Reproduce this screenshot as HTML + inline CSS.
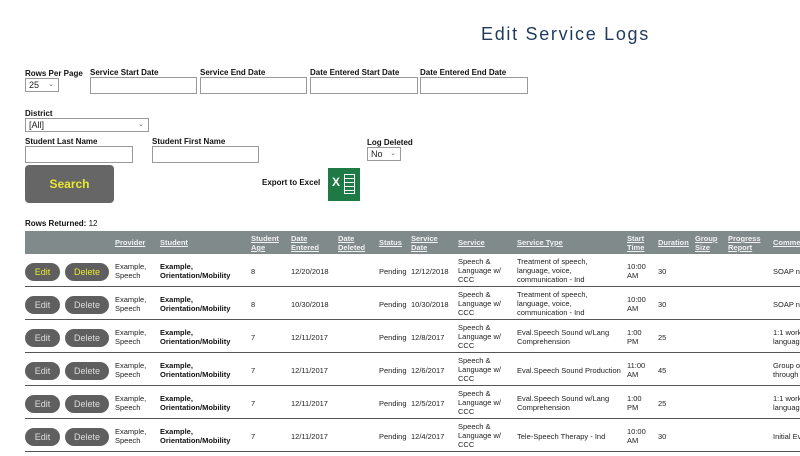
<!DOCTYPE html>
<html><head><meta charset="utf-8"><style>
*{margin:0;padding:0;box-sizing:border-box}
body{width:800px;height:456px;overflow:hidden;background:#fff;font-family:"Liberation Sans","DejaVu Sans",sans-serif;color:#111;position:relative}
.a{position:absolute}
.lbl{font-size:8px;font-weight:bold;color:#111;white-space:nowrap}
.inp{border:1px solid #999;background:#fff;height:17px}
.sel{border:1px solid #999;background:#fff;height:14px;font-size:9px;padding-left:3px;line-height:12px;color:#222}
.sel span{position:absolute;right:4px;top:0;font-size:7px;color:#777}
.hdr{position:absolute;left:25px;top:231px;width:775px;height:23px;background:#808a8b;overflow:hidden}
.h{position:absolute;font-size:7.5px;font-weight:bold;color:#f2f2f2;text-decoration:underline;line-height:9px;white-space:nowrap}
.row{position:absolute;left:25px;width:775px;height:33px;border-bottom:1.5px solid #555;overflow:hidden}
.c{position:absolute;font-size:7.5px;line-height:9px;color:#222;white-space:nowrap}
.b{font-weight:bold;color:#111}
.btn{position:absolute;top:9px;height:18px;border-radius:9px;background:#5f5f5f;color:#ddd;font-size:9px;text-align:center;line-height:18px}
</style></head><body>
<div class="a" style="left:481px;top:24px;font-size:18px;letter-spacing:1.7px;color:#1f3a5c">Edit Service Logs</div>

<div class="a lbl" style="left:25px;top:69px">Rows Per Page</div>
<div class="a sel" style="left:25px;top:78px;width:34px">25<span>&#8964;</span></div>
<div class="a lbl" style="left:90px;top:68px">Service Start Date</div>
<div class="a inp" style="left:90px;top:77px;width:107px"></div>
<div class="a lbl" style="left:200px;top:68px">Service End Date</div>
<div class="a inp" style="left:200px;top:77px;width:107px"></div>
<div class="a lbl" style="left:310px;top:68px">Date Entered Start Date</div>
<div class="a inp" style="left:310px;top:77px;width:108px"></div>
<div class="a lbl" style="left:420px;top:68px">Date Entered End Date</div>
<div class="a inp" style="left:420px;top:77px;width:108px"></div>

<div class="a lbl" style="left:25px;top:109px">District</div>
<div class="a sel" style="left:25px;top:118px;width:124px">[All]<span>&#8964;</span></div>
<div class="a lbl" style="left:25px;top:137px">Student Last Name</div>
<div class="a inp" style="left:25px;top:146px;width:108px"></div>
<div class="a lbl" style="left:152px;top:137px">Student First Name</div>
<div class="a inp" style="left:152px;top:146px;width:107px"></div>
<div class="a lbl" style="left:367px;top:138px">Log Deleted</div>
<div class="a sel" style="left:367px;top:147px;width:34px">No<span>&#8964;</span></div>

<div class="a" style="left:25px;top:165px;width:89px;height:38px;background:#666;border-radius:4px;color:#e8e832;font-weight:bold;font-size:12px;text-align:center;line-height:38px">Search</div>
<div class="a lbl" style="left:262px;top:178px">Export to Excel</div>
<div class="a" style="left:328px;top:168px;width:32px;height:33px;background:#1e7a45">
 <div class="a" style="left:4px;top:7px;color:#fff;font-size:12px;font-weight:bold">X</div>
 <div class="a" style="left:16px;top:6px;width:11px;height:20px;border:1.5px solid #fff;background:repeating-linear-gradient(#1e7a45 0 3px,#fff 3px 4px)"></div>
</div>

<div class="a lbl" style="left:25px;top:219px">Rows Returned: <span style="font-weight:normal">12</span></div>

<div class="hdr">
 <div class="h" style="left:90px;top:7px">Provider</div>
 <div class="h" style="left:135px;top:7px">Student</div>
 <div class="h" style="left:226px;top:3px">Student<br>Age</div>
 <div class="h" style="left:266px;top:3px">Date<br>Entered</div>
 <div class="h" style="left:313px;top:3px">Date<br>Deleted</div>
 <div class="h" style="left:354px;top:7px">Status</div>
 <div class="h" style="left:386px;top:3px">Service<br>Date</div>
 <div class="h" style="left:433px;top:7px">Service</div>
 <div class="h" style="left:492px;top:7px">Service Type</div>
 <div class="h" style="left:602px;top:3px">Start<br>Time</div>
 <div class="h" style="left:633px;top:7px">Duration</div>
 <div class="h" style="left:670px;top:3px">Group<br>Size</div>
 <div class="h" style="left:703px;top:3px">Progress<br>Report</div>
 <div class="h" style="left:748px;top:7px">Comments</div>
</div>

<div class="row" style="top:254px">
 <div class="btn" style="left:0;width:35px;color:#e8e832">Edit</div><div class="btn" style="left:40px;width:44px;color:#e8e832">Delete</div>
 <div class="c" style="left:90px;top:8px">Example,<br>Speech</div>
 <div class="c b" style="left:135px;top:8px">Example,<br>Orientation/Mobility</div>
 <div class="c" style="left:226px;top:13px">8</div><div class="c" style="left:266px;top:13px">12/20/2018</div>
 <div class="c" style="left:354px;top:13px">Pending</div><div class="c" style="left:386px;top:13px">12/12/2018</div>
 <div class="c" style="left:433px;top:3px">Speech &amp;<br>Language w/<br>CCC</div>
 <div class="c" style="left:492px;top:3px">Treatment of speech,<br>language, voice,<br>communication - Ind</div>
 <div class="c" style="left:602px;top:8px">10:00<br>AM</div><div class="c" style="left:633px;top:13px">30</div>
 <div class="c" style="left:748px;top:13px">SOAP no</div>
</div>
<div class="row" style="top:287px">
 <div class="btn" style="left:0;width:35px">Edit</div><div class="btn" style="left:40px;width:44px">Delete</div>
 <div class="c" style="left:90px;top:8px">Example,<br>Speech</div>
 <div class="c b" style="left:135px;top:8px">Example,<br>Orientation/Mobility</div>
 <div class="c" style="left:226px;top:13px">8</div><div class="c" style="left:266px;top:13px">10/30/2018</div>
 <div class="c" style="left:354px;top:13px">Pending</div><div class="c" style="left:386px;top:13px">10/30/2018</div>
 <div class="c" style="left:433px;top:3px">Speech &amp;<br>Language w/<br>CCC</div>
 <div class="c" style="left:492px;top:3px">Treatment of speech,<br>language, voice,<br>communication - Ind</div>
 <div class="c" style="left:602px;top:8px">10:00<br>AM</div><div class="c" style="left:633px;top:13px">30</div>
 <div class="c" style="left:748px;top:13px">SOAP no</div>
</div>
<div class="row" style="top:320px">
 <div class="btn" style="left:0;width:35px">Edit</div><div class="btn" style="left:40px;width:44px">Delete</div>
 <div class="c" style="left:90px;top:8px">Example,<br>Speech</div>
 <div class="c b" style="left:135px;top:8px">Example,<br>Orientation/Mobility</div>
 <div class="c" style="left:226px;top:13px">7</div><div class="c" style="left:266px;top:13px">12/11/2017</div>
 <div class="c" style="left:354px;top:13px">Pending</div><div class="c" style="left:386px;top:13px">12/8/2017</div>
 <div class="c" style="left:433px;top:3px">Speech &amp;<br>Language w/<br>CCC</div>
 <div class="c" style="left:492px;top:8px">Eval.Speech Sound w/Lang<br>Comprehension</div>
 <div class="c" style="left:602px;top:8px">1:00<br>PM</div><div class="c" style="left:633px;top:13px">25</div>
 <div class="c" style="left:748px;top:8px">1:1 work<br>languag</div>
</div>
<div class="row" style="top:353px">
 <div class="btn" style="left:0;width:35px">Edit</div><div class="btn" style="left:40px;width:44px">Delete</div>
 <div class="c" style="left:90px;top:8px">Example,<br>Speech</div>
 <div class="c b" style="left:135px;top:8px">Example,<br>Orientation/Mobility</div>
 <div class="c" style="left:226px;top:13px">7</div><div class="c" style="left:266px;top:13px">12/11/2017</div>
 <div class="c" style="left:354px;top:13px">Pending</div><div class="c" style="left:386px;top:13px">12/6/2017</div>
 <div class="c" style="left:433px;top:3px">Speech &amp;<br>Language w/<br>CCC</div>
 <div class="c" style="left:492px;top:13px">Eval.Speech Sound Production</div>
 <div class="c" style="left:602px;top:8px">11:00<br>AM</div><div class="c" style="left:633px;top:13px">45</div>
 <div class="c" style="left:748px;top:8px">Group o<br>through</div>
</div>
<div class="row" style="top:386px">
 <div class="btn" style="left:0;width:35px">Edit</div><div class="btn" style="left:40px;width:44px">Delete</div>
 <div class="c" style="left:90px;top:8px">Example,<br>Speech</div>
 <div class="c b" style="left:135px;top:8px">Example,<br>Orientation/Mobility</div>
 <div class="c" style="left:226px;top:13px">7</div><div class="c" style="left:266px;top:13px">12/11/2017</div>
 <div class="c" style="left:354px;top:13px">Pending</div><div class="c" style="left:386px;top:13px">12/5/2017</div>
 <div class="c" style="left:433px;top:3px">Speech &amp;<br>Language w/<br>CCC</div>
 <div class="c" style="left:492px;top:8px">Eval.Speech Sound w/Lang<br>Comprehension</div>
 <div class="c" style="left:602px;top:8px">1:00<br>PM</div><div class="c" style="left:633px;top:13px">25</div>
 <div class="c" style="left:748px;top:8px">1:1 work<br>languag</div>
</div>
<div class="row" style="top:419px">
 <div class="btn" style="left:0;width:35px">Edit</div><div class="btn" style="left:40px;width:44px">Delete</div>
 <div class="c" style="left:90px;top:8px">Example,<br>Speech</div>
 <div class="c b" style="left:135px;top:8px">Example,<br>Orientation/Mobility</div>
 <div class="c" style="left:226px;top:13px">7</div><div class="c" style="left:266px;top:13px">12/11/2017</div>
 <div class="c" style="left:354px;top:13px">Pending</div><div class="c" style="left:386px;top:13px">12/4/2017</div>
 <div class="c" style="left:433px;top:3px">Speech &amp;<br>Language w/<br>CCC</div>
 <div class="c" style="left:492px;top:13px">Tele-Speech Therapy - Ind</div>
 <div class="c" style="left:602px;top:8px">10:00<br>AM</div><div class="c" style="left:633px;top:13px">30</div>
 <div class="c" style="left:748px;top:13px">Initial Ev</div>
</div>
</body></html>
